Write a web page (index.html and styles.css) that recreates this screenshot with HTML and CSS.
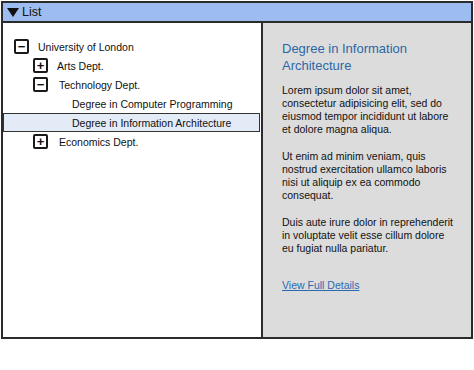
FILE: index.html
```html
<!DOCTYPE html>
<html lang="en">
<head>
  <meta charset="UTF-8">
  <title>List</title>
  <link rel="stylesheet" href="styles.css">
</head>
<body>

  <div class="janela">
    <div class="titulo">
      <span class="seta"></span>
      <span>List</span>
    </div>

    <div class="conteudo">
      <ul class="arvore">
        <li class="nivel0"><span class="caixa">&minus;</span>University of London</li>
        <li class="nivel1"><span class="caixa">+</span>Arts Dept.</li>
        <li class="nivel1"><span class="caixa">&minus;</span><span class="afasta">Technology Dept.</span></li>
        <li class="nivel2">Degree in Computer Programming</li>
        <li class="nivel2 selecionado">Degree in Information Architecture</li>
        <li class="nivel1"><span class="caixa">+</span><span class="afasta">Economics Dept.</span></li>
      </ul>

      <div class="detalhes">
        <h2>Degree in Information Architecture</h2>
        <p>Lorem ipsum dolor sit amet, consectetur adipisicing elit, sed do eiusmod tempor incididunt ut labore et dolore magna aliqua.</p>
        <p>Ut enim ad minim veniam, quis nostrud exercitation ullamco laboris nisi ut aliquip ex ea commodo consequat.</p>
        <p>Duis aute irure dolor in reprehenderit in voluptate velit esse cillum dolore eu fugiat nulla pariatur.</p>
        <a href="#" class="link">View Full Details</a>
      </div>
    </div>
  </div>

</body>
</html>
```

FILE: styles.css
```css
body {
  margin: 0;
  padding: 1px 0 0 1px;
  background: #fff;
  font-family: "Liberation Sans", Arial, sans-serif;
  color: #111;
}

.janela {
  width: 468px;
  height: 334px;
  border: 2px solid #2b2b2b;
  display: flex;
  flex-direction: column;
}

.titulo {
  height: 18px;
  background: #9dbdf0;
  border-bottom: 2px solid #2b2b2b;
  display: flex;
  align-items: center;
  padding-left: 4px;
  font-size: 12.5px;
  color: #111;
}

.seta {
  width: 0;
  height: 0;
  border-left: 6px solid transparent;
  border-right: 6px solid transparent;
  border-top: 9px solid #111;
  margin-right: 3px;
}

.conteudo {
  flex: 1;
  display: flex;
}

.arvore {
  list-style: none;
  margin: 0;
  padding: 14px 0 0 0;
  width: 258px;
  border-right: 2px solid #2b2b2b;
  font-size: 10.5px;
}

.arvore li {
  height: 19px;
  display: flex;
  align-items: center;
  box-sizing: border-box;
}

.nivel0 { padding-left: 11px; }
.nivel1 { padding-left: 30px; }
.nivel2 { padding-left: 69px; }

.caixa {
  width: 11px;
  height: 11px;
  border: 2px solid #1a1a1a;
  border-radius: 2px;
  display: inline-flex;
  align-items: center;
  justify-content: center;
  font-size: 13px;
  font-weight: bold;
  line-height: 1;
  margin-right: 9px;
}

.afasta {
  margin-left: 2px;
}

.arvore li.selecionado {
  background: #e3ebf7;
  border: 1px solid #333;
  padding-left: 68px;
  margin-right: 1px;
}

.detalhes {
  flex: 1;
  background: #dcdcdc;
  padding: 17px 16px 0 19px;
  font-size: 10.5px;
  line-height: 13px;
}

.detalhes h2 {
  margin: 0 0 10px;
  font-size: 13px;
  font-weight: normal;
  line-height: 17px;
  color: #2c67a6;
}

.detalhes p {
  margin: 0 0 14px;
}

.link {
  display: inline-block;
  margin-top: 10px;
  color: #2a6ab0;
}
```
